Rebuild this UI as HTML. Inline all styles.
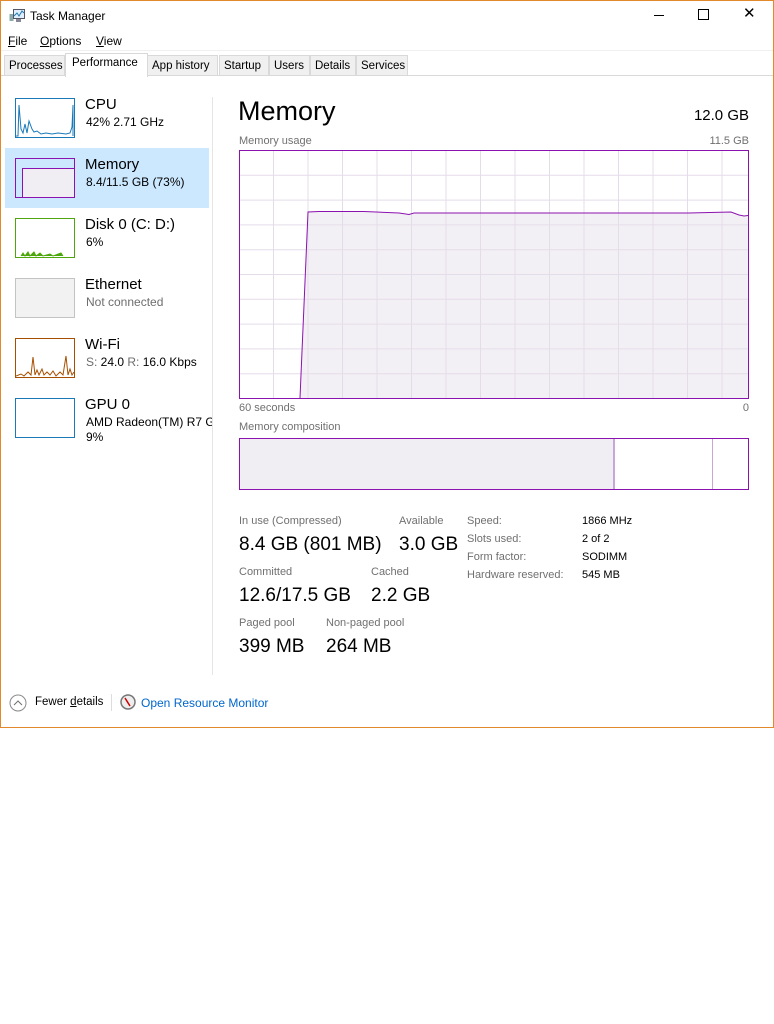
<!DOCTYPE html>
<html><head><meta charset="utf-8"><style>
*{margin:0;padding:0;box-sizing:border-box}
body{width:774px;height:1024px;background:#fff;font-family:"Liberation Sans",sans-serif;position:relative;overflow:hidden;color:#000}
.a{position:absolute;white-space:nowrap}
.win{position:absolute;left:0;top:0;width:774px;height:728px;border:1px solid #e3892c}
.tab{position:absolute;top:55px;height:21px;background:#f0f0f0;border:1px solid #d9d9d9;font-size:11.5px;padding:4px 0 0 4px;color:#000}
.s{font-size:11px;color:#6d6d6d}
.t{font-size:15px}
.v{font-size:19px}
.g{font-size:11px;color:#707070}
.k{font-size:11px;color:#000}
.thumb{position:absolute;left:15px;width:60px;height:40px;border:1px solid}
</style></head><body>
<div class="win"></div>
<svg class="a" style="left:9px;top:8px" width="17" height="15" viewBox="0 0 17 15"><rect x="0.5" y="6" width="4" height="7" fill="#8aa"/><rect x="4.5" y="1.5" width="11" height="9" fill="#dfefff" stroke="#556"/><polyline points="5,8 8,5 10,8 13,3 15,5" fill="none" stroke="#27a" stroke-width="1"/><rect x="7" y="11" width="5" height="3" fill="#889"/></svg>
<div class="a" style="left:30px;top:9px;font-size:12px">Task Manager</div>
<div class="a" style="left:654px;top:15px;width:10px;height:1px;background:#000"></div>
<div class="a" style="left:698px;top:9px;width:11px;height:11px;border:1px solid #000"></div>
<div class="a" style="left:743px;top:4px;font-size:15px">✕</div>
<div class="a" style="left:8px;top:34px;font-size:12px"><u>F</u>ile</div>
<div class="a" style="left:40px;top:34px;font-size:12px"><u>O</u>ptions</div>
<div class="a" style="left:96px;top:34px;font-size:12px"><u>V</u>iew</div>
<div class="a" style="left:1px;top:50px;width:772px;height:1px;background:#f0f0f0"></div>
<div class="a" style="left:1px;top:75px;width:772px;height:1px;background:#d9d9d9"></div>
<div class="tab" style="left:4px;width:61px">Processes</div>
<div class="tab" style="left:147px;width:71px">App history</div>
<div class="tab" style="left:219px;width:50px">Startup</div>
<div class="tab" style="left:269px;width:41px">Users</div>
<div class="tab" style="left:310px;width:46px">Details</div>
<div class="tab" style="left:356px;width:52px">Services</div>
<div class="a" style="left:65px;top:53px;width:83px;height:24px;background:#fff;border:1px solid #d9d9d9;border-bottom:none;font-size:11.5px;padding:3px 0 0 6px">Performance</div>
<div class="a" style="left:5px;top:148px;width:204px;height:60px;background:#cce8ff"></div>
<div class="a" style="left:212px;top:97px;width:1px;height:578px;background:#e5e5e5"></div>
<div class="thumb" style="top:98px;border-color:#1a7ab8"><svg width="58" height="38"><polyline points="0,37 2,37 3,6 5,30 7,34 9,25 11,34 13,22 16,30 18,33 21,32 25,35 30,34 36,35 42,34 50,35 54,34 56,28 57,6 57,37" fill="none" stroke="#1a7ab8" stroke-width="1"/></svg></div>
<div class="a t" style="left:85px;top:96px">CPU</div>
<div class="a k" style="left:86px;top:115px;font-size:12px">42% 2.71 GHz</div>
<div class="thumb" style="top:158px;border-color:#8b12ae"><div style="position:absolute;left:6px;top:9px;width:52px;height:29px;border-left:1px solid #8b12ae;border-top:1px solid #8b12ae;background:#f1eef3"></div></div>
<div class="a t" style="left:85px;top:156px">Memory</div>
<div class="a k" style="left:86px;top:175px;font-size:12px">8.4/11.5 GB (73%)</div>
<div class="thumb" style="top:218px;border-color:#4da60c"><svg width="58" height="38"><polyline points="5,37 7,34 9,37 12,33 14,37 18,33 20,37 24,34 27,37 34,35 37,37 45,34 47,37" fill="#4da60c" stroke="#4da60c" stroke-width="1"/></svg></div>
<div class="a t" style="left:85px;top:216px">Disk 0 (C: D:)</div>
<div class="a k" style="left:86px;top:235px;font-size:12px">6%</div>
<div class="thumb" style="top:278px;border-color:#c3c3c3;background:#f2f2f2"></div>
<div class="a t" style="left:85px;top:276px">Ethernet</div>
<div class="a s" style="left:86px;top:295px;font-size:12px">Not connected</div>
<div class="thumb" style="top:338px;border-color:#a74f01"><svg width="58" height="38"><polyline points="0,37 5,35 8,37 12,33 15,36 17,18 19,36 21,31 23,36 26,30 28,36 31,33 34,36 37,32 40,37 44,33 47,36 50,17 52,36 54,30 56,36 58,33" fill="none" stroke="#a74f01" stroke-width="1"/></svg></div>
<div class="a t" style="left:85px;top:336px">Wi-Fi</div>
<div class="a k" style="left:86px;top:355px;font-size:12px"><span style="color:#6d6d6d">S:</span> 24.0 <span style="color:#6d6d6d">R:</span> 16.0 Kbps</div>
<div class="thumb" style="top:398px;border-color:#1a7ab8"></div>
<div class="a t" style="left:85px;top:396px">GPU 0</div>
<div class="a k" style="left:86px;top:415px;font-size:12px;width:126px;overflow:hidden">AMD Radeon(TM) R7 Graphics</div>
<div class="a k" style="left:86px;top:430px;font-size:12px">9%</div>
<div class="a" style="left:238px;top:96px;font-size:27px">Memory</div>
<div class="a" style="left:640px;top:107px;width:109px;text-align:right;font-size:15px">12.0 GB</div>
<div class="a g" style="left:239px;top:135px">Memory usage</div>
<div class="a g" style="left:649px;top:135px;width:100px;text-align:right">11.5 GB</div>
<svg class="a" style="left:239px;top:150px" width="510" height="249" viewBox="0 0 510 249">
<path d="M61 248L69 62L80 61.5L125 61.5L160 63L170 64.5L175 63L450 63L492 62L500 65L505 66L509 65.5L509 248Z" fill="#f3f0f5"/>
<g stroke="#e5dcea" stroke-width="1">
<path d="M0 25.3H510M0 50.1H510M0 74.9H510M0 99.7H510M0 124.5H510M0 149.3H510M0 174.1H510M0 198.9H510M0 223.7H510"/>
<path d="M34.5 0V249M69 0V249M103.5 0V249M138 0V249M172.5 0V249M207 0V249M241.5 0V249M276 0V249M310.5 0V249M345 0V249M379.5 0V249M414 0V249M448.5 0V249M483 0V249"/>
</g>
<path d="M61 248L69 62L80 61.5L125 61.5L160 63L170 64.5L175 63L450 63L492 62L500 65L505 66L509 65.5" fill="none" stroke="#8b12ae" stroke-width="1"/>
<rect x="0.5" y="0.5" width="509" height="248" fill="none" stroke="#8b12ae"/>
</svg>
<div class="a g" style="left:239px;top:402px">60 seconds</div>
<div class="a g" style="left:700px;top:402px;width:49px;text-align:right">0</div>
<div class="a g" style="left:239px;top:421px">Memory composition</div>
<div class="a" style="left:239px;top:438px;width:510px;height:52px;border:1px solid #8b12ae">
<div style="position:absolute;left:0;top:0;width:375px;height:50px;background:#f1eef3;border-right:2px solid #c9a6d8"></div>
<div style="position:absolute;left:472px;top:0;width:1px;height:50px;background:#c9a6d8"></div>
</div>
<div class="a g" style="left:239px;top:515px">In use (Compressed)</div>
<div class="a v" style="left:239px;top:534px">8.4 GB (801 MB)</div>
<div class="a g" style="left:399px;top:515px">Available</div>
<div class="a v" style="left:399px;top:534px">3.0 GB</div>
<div class="a g" style="left:239px;top:566px">Committed</div>
<div class="a v" style="left:239px;top:585px">12.6/17.5 GB</div>
<div class="a g" style="left:371px;top:566px">Cached</div>
<div class="a v" style="left:371px;top:585px">2.2 GB</div>
<div class="a g" style="left:239px;top:617px">Paged pool</div>
<div class="a v" style="left:239px;top:636px">399 MB</div>
<div class="a g" style="left:326px;top:617px">Non-paged pool</div>
<div class="a v" style="left:326px;top:636px">264 MB</div>
<div class="a g" style="left:467px;top:515px">Speed:</div><div class="a k" style="left:582px;top:515px">1866 MHz</div>
<div class="a g" style="left:467px;top:533px">Slots used:</div><div class="a k" style="left:582px;top:533px">2 of 2</div>
<div class="a g" style="left:467px;top:551px">Form factor:</div><div class="a k" style="left:582px;top:551px">SODIMM</div>
<div class="a g" style="left:467px;top:569px">Hardware reserved:</div><div class="a k" style="left:582px;top:569px">545 MB</div>
<svg class="a" style="left:9px;top:694px" width="18" height="18"><circle cx="9" cy="9" r="8" fill="none" stroke="#8a8a8a"/><polyline points="5,11 9,7 13,11" fill="none" stroke="#707070"/></svg>
<div class="a" style="left:35px;top:696px;font-size:11.5px">Fewer <u>d</u>etails</div>
<div class="a" style="left:111px;top:694px;width:1px;height:17px;background:#ddd"></div>
<svg class="a" style="left:120px;top:694px" width="16" height="16"><circle cx="8" cy="8" r="7" fill="#eee" stroke="#777" stroke-width="1.5"/><line x1="5" y1="4" x2="10" y2="12" stroke="#c00" stroke-width="1.5"/></svg>
<div class="a" style="left:141px;top:696px;font-size:12px;color:#0066cc">Open Resource Monitor</div>
</body></html>
